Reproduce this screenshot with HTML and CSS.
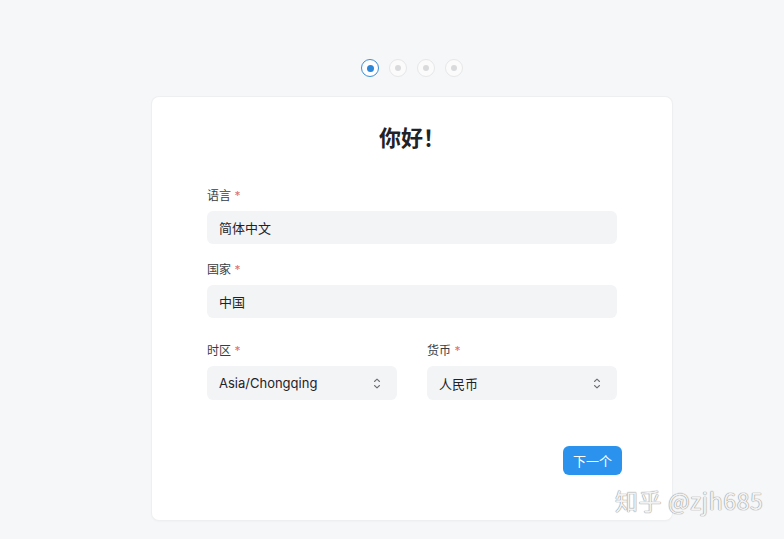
FILE: index.html
```html
<!DOCTYPE html>
<html lang="zh-CN">
<head>
<meta charset="utf-8">
<title>你好</title>
<link rel="stylesheet" href="styles.css">
</head>
<body>
<div class="page">
  <div class="steps">
    <span class="step active"><span class="dot"></span></span>
    <span class="step"><span class="dot"></span></span>
    <span class="step"><span class="dot"></span></span>
    <span class="step"><span class="dot"></span></span>
  </div>
  <div class="card">
    <h1 class="title">你好！</h1>
    <div class="field">
      <label class="label">语言 <span class="req">*</span></label>
      <div class="input">简体中文</div>
    </div>
    <div class="field f2">
      <label class="label">国家 <span class="req">*</span></label>
      <div class="input">中国</div>
    </div>
    <div class="row">
      <div class="field">
        <label class="label">时区 <span class="req">*</span></label>
        <div class="input select"><span>Asia/Chongqing</span>
          <svg class="chev" width="8" height="11" viewBox="0 0 8 11"><path d="M1.5 3.5 L4 1.2 L6.5 3.5 M1.5 7.5 L4 9.8 L6.5 7.5" fill="none" stroke="#6b6f76" stroke-width="1.1" stroke-linecap="round" stroke-linejoin="round"/></svg>
        </div>
      </div>
      <div class="field">
        <label class="label">货币 <span class="req">*</span></label>
        <div class="input select"><span>人民币</span>
          <svg class="chev" width="8" height="11" viewBox="0 0 8 11"><path d="M1.5 3.5 L4 1.2 L6.5 3.5 M1.5 7.5 L4 9.8 L6.5 7.5" fill="none" stroke="#6b6f76" stroke-width="1.1" stroke-linecap="round" stroke-linejoin="round"/></svg>
        </div>
      </div>
    </div>
    <div class="actions">
      <button class="btn">下一个</button>
    </div>
  </div>
  <div class="watermark">知乎 @zjh685</div>
</div>
</body>
</html>
```
FILE: styles.css
```css
html, body {
  margin: 0;
  padding: 0;
}
body {
  background: #f6f7f8;
  font-family: "Inter", "Noto Sans CJK SC", sans-serif;
  color: #1f2328;
}
.page {
  position: relative;
  width: 784px;
  height: 539px;
  overflow: hidden;
}
.steps {
  display: flex;
  justify-content: center;
  gap: 10px;
  padding-top: 59px;
  padding-left: 40px;
}
.step {
  box-sizing: border-box;
  width: 18px;
  height: 18px;
  border-radius: 50%;
  border: 1.5px solid #e6e7e9;
  background: #fbfbfb;
  display: flex;
  align-items: center;
  justify-content: center;
}
.step .dot {
  width: 6px;
  height: 6px;
  border-radius: 50%;
  background: #d9dadc;
}
.step.active {
  border: 1px solid #3d8fd6;
  background: #fff;
}
.step.active .dot {
  background: #2d87d9;
  width: 7px;
  height: 7px;
}
.card {
  box-sizing: border-box;
  width: 520px;
  margin: 20px 0 0 152px;
  background: #fff;
  border-radius: 7px;
  box-shadow: 0 0 0 1px #eeeff1, 0 1px 3px rgba(0,0,0,0.05);
  padding: 25px 55px 45px;
}
.title {
  margin: 0 0 33px;
  text-align: center;
  font-size: 22px;
  line-height: 32px;
  font-weight: 700;
  color: #1f2328;
}
.field {
  display: flex;
  flex-direction: column;
}
.f2 {
  margin-top: 17px;
}
.label {
  font-size: 12px;
  line-height: 18px;
  color: #3a3d42;
  margin-bottom: 6px;
}
.req {
  color: #e07070;
}
.input {
  box-sizing: border-box;
  height: 33px;
  background: #f3f4f6;
  border-radius: 6px;
  padding: 0 12px;
  font-size: 13px;
  color: #1f2328;
  display: flex;
  align-items: center;
}
.row {
  display: grid;
  grid-template-columns: 190px 190px;
  column-gap: 30px;
  margin-top: 24px;
}
.select {
  height: 34px;
  justify-content: space-between;
  padding-right: 16px;
}
.chev {
  display: block;
}
.actions {
  display: flex;
  justify-content: flex-end;
  margin: 46px -5px 0 0;
}
.btn {
  width: 59px;
  height: 29px;
  border: none;
  border-radius: 6px;
  background: #2b93ee;
  color: #fff;
  font-family: "Noto Sans CJK SC", sans-serif;
  font-size: 13px;
  padding: 0;
}
.watermark {
  position: absolute;
  left: 615px;
  top: 484px;
  font-family: "Noto Sans CJK SC", sans-serif;
  font-size: 23px;
  line-height: 32px;
  letter-spacing: 0.6px;
  color: #f2f2f2;
  text-shadow: 0 0 1px #8a8a8a, 0 0 1px #8a8a8a;
  white-space: nowrap;
}
```
